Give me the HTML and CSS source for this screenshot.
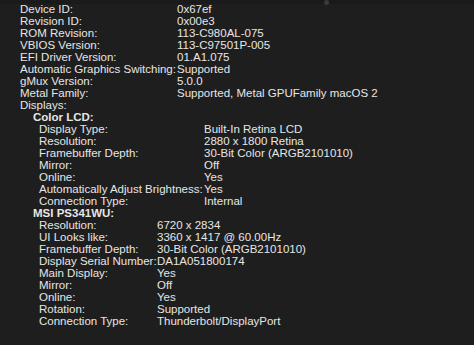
FILE: index.html
```html
<!DOCTYPE html>
<html lang="en">
<head>
  <meta charset="UTF-8" />
  <title>Graphics/Displays</title>
  <link rel="stylesheet" href="styles.css">
</head>
<body>
  <div class="topbar"><span class="dot"></span></div>

  <main class="info">
    <div class="rows top">
      <span>Device ID:</span><span>0x67ef</span>
      <span>Revision ID:</span><span>0x00e3</span>
      <span>ROM Revision:</span><span>113-C980AL-075</span>
      <span>VBIOS Version:</span><span>113-C97501P-005</span>
      <span>EFI Driver Version:</span><span>01.A1.075</span>
      <span>Automatic Graphics Switching:</span><span>Supported</span>
      <span>gMux Version:</span><span>5.0.0</span>
      <span>Metal Family:</span><span>Supported, Metal GPUFamily macOS 2</span>
    </div>
    <div class="heading">Displays:</div>

    <div class="display">
      <div class="name">Color LCD:</div>
      <div class="rows lcd">
        <span>Display Type:</span><span>Built-In Retina LCD</span>
        <span>Resolution:</span><span>2880 x 1800 Retina</span>
        <span>Framebuffer Depth:</span><span>30-Bit Color (ARGB2101010)</span>
        <span>Mirror:</span><span>Off</span>
        <span>Online:</span><span>Yes</span>
        <span>Automatically Adjust Brightness:</span><span>Yes</span>
        <span>Connection Type:</span><span>Internal</span>
      </div>
    </div>

    <div class="display">
      <div class="name">MSI PS341WU:</div>
      <div class="rows msi">
        <span>Resolution:</span><span>6720 x 2834</span>
        <span>UI Looks like:</span><span>3360 x 1417 @ 60.00Hz</span>
        <span>Framebuffer Depth:</span><span>30-Bit Color (ARGB2101010)</span>
        <span>Display Serial Number:</span><span>DA1A051800174</span>
        <span>Main Display:</span><span>Yes</span>
        <span>Mirror:</span><span>Off</span>
        <span>Online:</span><span>Yes</span>
        <span>Rotation:</span><span>Supported</span>
        <span>Connection Type:</span><span>Thunderbolt/DisplayPort</span>
      </div>
    </div>
  </main>
</body>
</html>
```

FILE: styles.css
```css
* {
  box-sizing: border-box;
}
html, body {
  height: 100%;
}
body {
  margin: 0;
  background-color: #1e1e1e;
  color: #e6e6e6;
  font-family: "Liberation Sans", Arial, sans-serif;
  font-size: 11.5px;
  line-height: 12px;
  overflow: hidden;
  position: relative;
}
.topbar {
  position: absolute;
  top: 0;
  left: 0;
  right: 0;
  height: 4px;
  background-color: #1a1a1a;
  z-index: 2;
}
.dot {
  position: absolute;
  left: 324px;
  top: 0;
  width: 5px;
  height: 5px;
  border-radius: 50%;
  background-color: #3a3a3a;
}
.info {
  padding: 3px 0 0 20px;
}
.rows {
  display: grid;
  white-space: nowrap;
}
.top {
  grid-template-columns: 157px auto;
}
.display {
  padding-left: 13px;
}
.name {
  font-weight: 700;
}
.lcd {
  padding-left: 6px;
  grid-template-columns: 165px auto;
}
.msi {
  padding-left: 6px;
  grid-template-columns: 118px auto;
}
```
